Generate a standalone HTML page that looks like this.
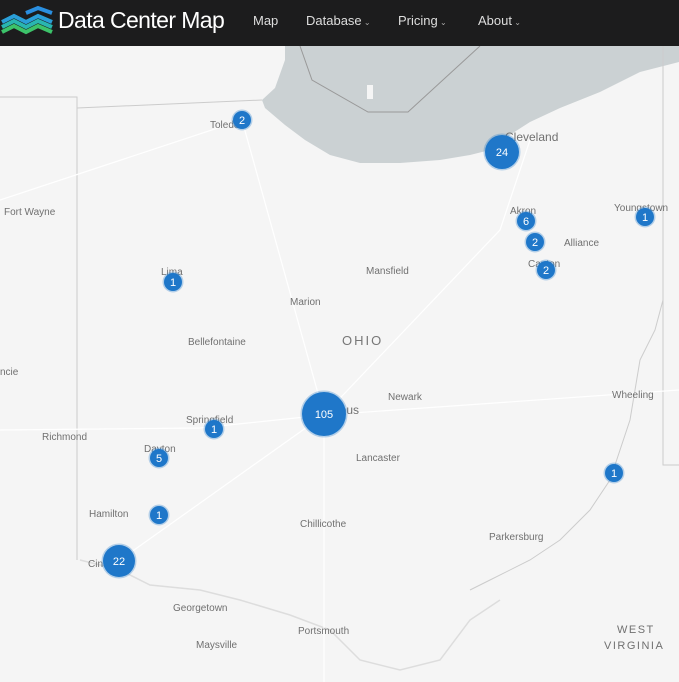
<!DOCTYPE html>
<html><head><meta charset="utf-8"><style>
html,body{margin:0;padding:0;width:679px;height:682px;overflow:hidden;background:#f5f5f5;font-family:"Liberation Sans",sans-serif}
.hdr{position:absolute;left:0;top:0;width:679px;height:46px;background:#1c1c1d;color:#fff}
.hdr .t{position:absolute;left:58px;top:7px;font-size:23px;letter-spacing:-0.6px;color:#fff}
.hdr .n{position:absolute;top:13px;font-size:13px;color:#ddd}
.hdr .n small{font-size:8px;color:#aaa}
svg{position:absolute;left:0;top:0}
</style></head><body>
<svg width="679" height="682" viewBox="0 0 679 682">
<rect width="679" height="682" fill="#f5f5f5"/>
<path d="M285 46 L679 46 L679 62 L640 72 L600 92 L560 108 L530 122 L505 138 L490 150 L470 155 L440 160 L400 163 L360 163 L330 155 L305 140 L285 125 L265 108 L262 100 L275 88 L285 60 Z" fill="#cbd1d3"/>
<path d="M300 46 L312 80 L368 112 L408 112 L480 46" fill="none" stroke="#999" stroke-width="1"/>
<rect x="367" y="85" width="6" height="14" fill="#f5f5f5"/>
<path d="M0 97 L77 97 L77 560" fill="none" stroke="#ccc"/>
<path d="M77 108 L262 100" fill="none" stroke="#ccc"/>
<path d="M663 46 L663 300 L655 330 L640 360 L630 420 L610 480 L590 510 L560 540 L530 560 L490 580 L470 590" fill="none" stroke="#ccc"/>
<path d="M663 300 L663 465 L679 465" fill="none" stroke="#ccc"/>
<path d="M80 560 L120 570 L150 585 L200 590 L240 600 L290 615 L330 630 L360 660 L400 670 L440 660 L470 620 L500 600" fill="none" stroke="#ddd" stroke-width="1.5"/>
<g stroke="#fff" stroke-width="1.2" fill="none">
<path d="M0 430 L200 428 L324 415 L679 390"/><path d="M324 415 L324 682"/><path d="M324 415 L500 230 L530 140"/><path d="M120 560 L324 415"/><path d="M242 120 L324 415"/><path d="M0 200 L242 120"/>
</g>
<g font-size="10" fill="#707070">
<text x="4" y="215">Fort Wayne</text><text x="161" y="275">Lima</text><text x="290" y="305">Marion</text><text x="366" y="274">Mansfield</text><text x="188" y="345">Bellefontaine</text><text x="186" y="423">Springfield</text><text x="144" y="452">Dayton</text><text x="42" y="440">Richmond</text><text x="0" y="375">ncie</text><text x="89" y="517">Hamilton</text><text x="88" y="567">Cincinnati</text><text x="356" y="461">Lancaster</text><text x="388" y="400">Newark</text><text x="300" y="527">Chillicothe</text><text x="489" y="540">Parkersburg</text><text x="173" y="611">Georgetown</text><text x="298" y="634">Portsmouth</text><text x="196" y="648">Maysville</text><text x="612" y="398">Wheeling</text><text x="564" y="246">Alliance</text><text x="528" y="267">Canton</text><text x="510" y="214">Akron</text><text x="614" y="211">Youngstown</text><text x="210" y="128">Toledo</text>
<text x="505" y="141" font-size="12">Cleveland</text><text x="305" y="414" font-size="12">Columbus</text>
<text x="342" y="345" font-size="13" letter-spacing="2" fill="#777">OHIO</text>
<text x="617" y="633" font-size="11" letter-spacing="1.5">WEST</text><text x="604" y="649" font-size="11" letter-spacing="1.5">VIRGINIA</text>
</g>
<g font-size="11" fill="#fff" text-anchor="middle">
<g fill="#1f77c9" stroke="rgba(31,119,201,0.3)" stroke-width="3">
<circle cx="242" cy="120" r="9"/><circle cx="502" cy="152" r="17"/><circle cx="526" cy="221" r="9"/><circle cx="535" cy="242" r="9"/><circle cx="546" cy="270" r="9"/><circle cx="645" cy="217" r="9"/><circle cx="173" cy="282" r="9"/><circle cx="324" cy="414" r="22"/><circle cx="214" cy="429" r="9"/><circle cx="159" cy="458" r="9"/><circle cx="159" cy="515" r="9"/><circle cx="119" cy="561" r="16"/><circle cx="614" cy="473" r="9"/>
</g>
<text x="242" y="124">2</text><text x="502" y="156">24</text><text x="526" y="225">6</text><text x="535" y="246">2</text><text x="546" y="274">2</text><text x="645" y="221">1</text><text x="173" y="286">1</text><text x="324" y="418">105</text><text x="214" y="433">1</text><text x="159" y="462">5</text><text x="159" y="519">1</text><text x="119" y="565">22</text><text x="614" y="477">1</text>
</g>
</svg>
<div class="hdr">
<svg width="56" height="46" viewBox="0 0 56 46" style="left:0;top:0">
<path d="M2 22 L14 16 L26 22 L38 16 L52 22" fill="none" stroke="#2a9fd8" stroke-width="4"/>
<path d="M2 27 L14 21 L26 27 L38 21 L52 27" fill="none" stroke="#29b6b0" stroke-width="4"/>
<path d="M2 32 L14 26 L26 32 L38 26 L52 32" fill="none" stroke="#3cc36a" stroke-width="4"/>
<path d="M26 13 L38 8 L52 13" fill="none" stroke="#2a8fe0" stroke-width="4"/>
</svg>
<div class="t">Data Center Map</div>
<div class="n" style="left:253px">Map</div>
<div class="n" style="left:306px">Database<small> ⌄</small></div>
<div class="n" style="left:398px">Pricing<small> ⌄</small></div>
<div class="n" style="left:478px">About<small> ⌄</small></div>
</div>
</body></html>
